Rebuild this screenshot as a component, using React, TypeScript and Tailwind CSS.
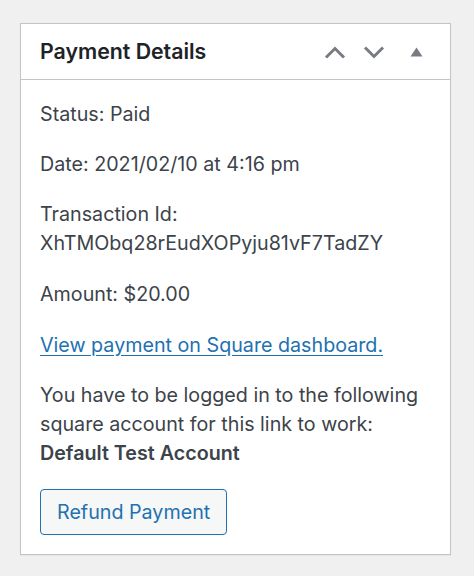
import React from "react";

function ChevronUp() {
  return (
    <svg width="22" height="13" viewBox="0 0 22 13" fill="none">
      <path d="M2 11.5 L11 2.5 L20 11.5" stroke="#787c82" strokeWidth="3" />
    </svg>
  );
}

function ChevronDown() {
  return (
    <svg width="22" height="13" viewBox="0 0 22 13" fill="none">
      <path d="M2 1.5 L11 10.5 L20 1.5" stroke="#787c82" strokeWidth="3" />
    </svg>
  );
}

function Triangle() {
  return (
    <svg width="13" height="10" viewBox="0 0 13 10">
      <path d="M6.5 0.5 L12.5 9.5 L0.5 9.5 Z" fill="#787c82" />
    </svg>
  );
}

export default function App() {
  return (
    <main
      className="min-h-screen bg-[#f0f0f1] pt-[23px] pl-[20px]"
      style={{ fontFamily: "Inter, 'Noto Sans', sans-serif" }}
    >
      <div className="w-[431px] border border-[#c3c4c7] bg-white shadow-[0_1px_1px_rgba(0,0,0,0.04)]">
        {/* Header */}
        <div className="flex h-[56px] items-center border-b border-[#c3c4c7] pl-[19px] pr-[20px] pt-[1px]">
          <h2 className="flex-1 text-[21.3px] font-semibold text-[#1d2327]">
            Payment Details
          </h2>
          <div className="flex items-center">
            <button className="flex h-[36px] w-[36px] items-center justify-center">
              <ChevronUp />
            </button>
            <button className="ml-[3px] flex h-[36px] w-[36px] items-center justify-center">
              <ChevronDown />
            </button>
            <button className="ml-[10px] flex h-[36px] w-[28px] items-center justify-center">
              <Triangle />
            </button>
          </div>
        </div>

        {/* Body */}
        <div className="px-[19px] pt-[20px] pb-[19px] text-[19.7px] leading-[29px] text-[#3c434a]">
          <p>Status: Paid</p>
          <p className="mt-[21px]">Date: 2021/02/10 at 4:16 pm</p>
          <p className="mt-[21px]">
            Transaction Id:
            <br />
            XhTMObq28rEudXOPyju81vF7TadZY
          </p>
          <p className="mt-[22px]">Amount: $20.00</p>
          <p className="mt-[22px]">
            <a href="#" className="text-[#2271b1] underline underline-offset-[3px]">
              View payment on Square dashboard.
            </a>
          </p>
          <p className="mt-[21px]">
            You have to be logged in to the following square account for this
            link to work:
            <br />
            <strong className="font-semibold">Default Test Account</strong>
          </p>
          <button className="mt-[21px] h-[46px] rounded-[4px] border border-[#2271b1] bg-[#f6f7f7] px-[16px] text-[19.7px] text-[#2271b1]">
            Refund Payment
          </button>
        </div>
      </div>
    </main>
  );
}
